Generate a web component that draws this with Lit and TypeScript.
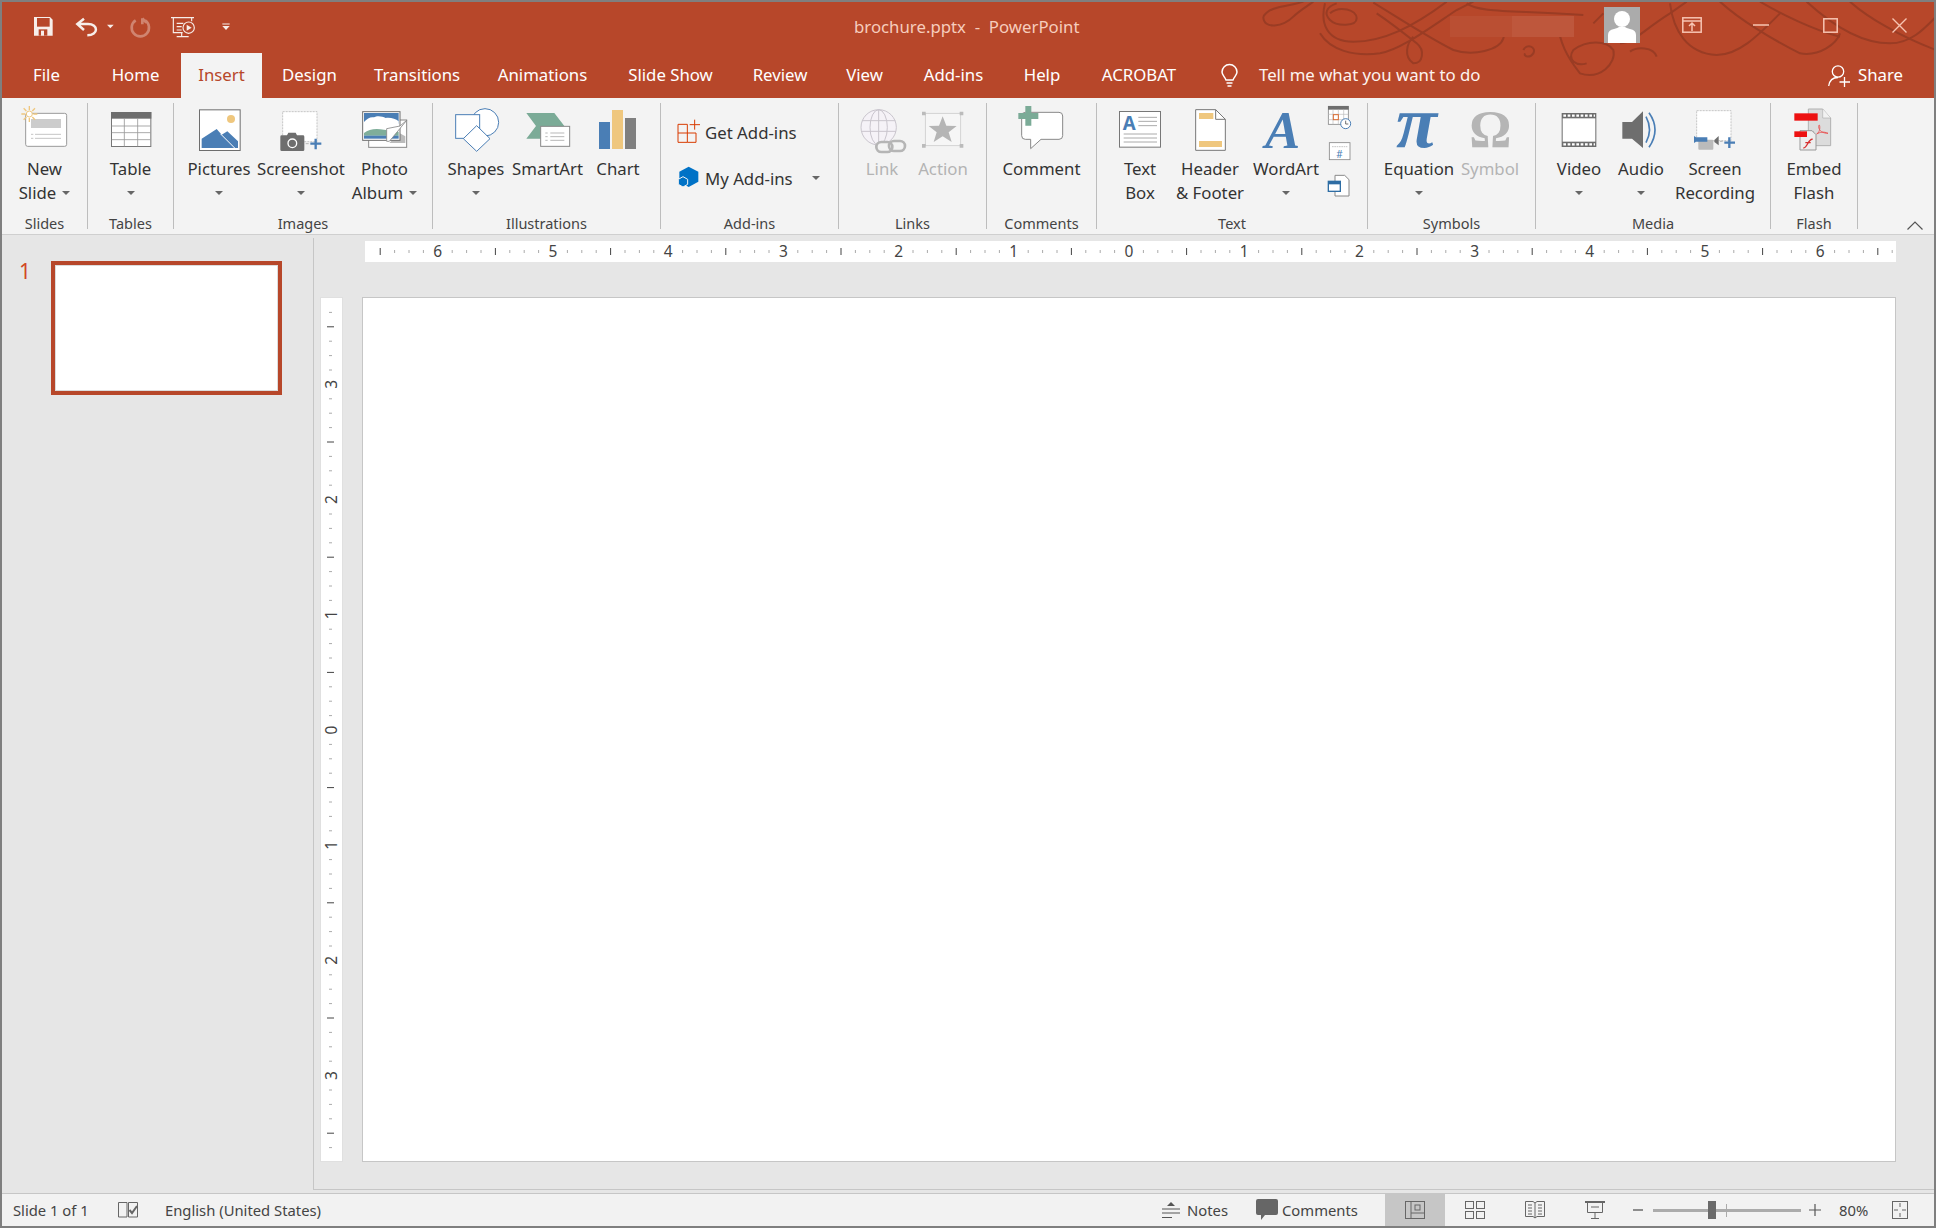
import { LitElement, html, css, svg } from "lit";
import { customElement } from "lit/decorators.js";

const BLUE = "#4A7EB5";
const YEL = "#EFC77E";
const GRN = "#7BAB97";
const DK = "#6e6e6e";

const ico = (vbx: number, c: unknown) =>
  html`<svg class="ico" width="60" height="54" viewBox="${vbx} 15 180 162">${c}</svg>`;
const z = (x: number, y: number, w: number, h: number, c: unknown) =>
  html`<svg class="z" width="${w / 3}" height="${h / 3}" viewBox="${x} ${y} ${w} ${h}">${c}</svg>`;

const I = {
  newSlide: svg`<rect x="77" y="46" width="123" height="99" rx="6" fill="#fff" stroke="#999" stroke-width="3"/>
    <rect x="93" y="63" width="90" height="27" fill="#ccc"/>
    <path d="M105 109H183M105 121H183M93 109h7M93 121h7" stroke="#bbb" stroke-width="2.5"/>
    <circle cx="88" cy="48" r="9" fill="#fff" stroke="${YEL}" stroke-width="3"/>
    <path d="M88 24V36M88 60V72M64 48H76M100 48H112M71 31L79 39M97 57L105 65M71 65L79 57M97 39L105 31" stroke="${YEL}" stroke-width="4"/>`,
  table: svg`<rect x="334.5" y="43.5" width="118" height="102" fill="#fff" stroke="#777" stroke-width="3"/>
    <rect x="333" y="42" width="121" height="20" fill="${DK}"/>
    <path d="M373 62V145M413 62V145M335 84H452M335 104H452M335 125H452" stroke="#999" stroke-width="2.5"/>`,
  pictures: svg`<rect x="598.5" y="35.5" width="122" height="122" fill="#fff" stroke="${DK}" stroke-width="3"/>
    <circle cx="693" cy="63" r="12" fill="${YEL}"/>
    <path d="M605 150V122L650 93L665 110L682 100L714 130V150Z" fill="${BLUE}"/>
    <path d="M662 108L704 150" stroke="#fff" stroke-width="3"/>`,
  screenshot: svg`<rect x="847" y="41" width="103" height="90" fill="#fff" stroke="#bbb" stroke-width="2.5" stroke-dasharray="6 3"/>
    <path d="M840 116q0-4 4-4h16l4-8h22l4 8h18q4 0 4 4v39q0 4-4 4h-64q-4 0-4-4z" fill="${DK}"/>
    <circle cx="876" cy="136" r="13" fill="${DK}" stroke="#fff" stroke-width="4"/>
    <path d="M916 137h9" stroke="#aaa" stroke-width="2.5"/>
    <path d="M930 137H963M946 122V154" stroke="${BLUE}" stroke-width="7"/>`,
  photo: svg`<rect x="1103" y="66" width="114" height="82" fill="#fff" stroke="#888" stroke-width="3"/>
    <path d="M1165 135L1195 105L1213 115V135Z" fill="#bbb"/>
    <rect x="1085" y="41" width="112" height="86" fill="#fff" stroke="${DK}" stroke-width="3"/>
    <rect x="1089" y="45" width="104" height="32" fill="${BLUE}"/>
    <path d="M1089 72c10-12 20-16 30-14 8-6 25-4 35 2 14-2 30 2 39 10v20H1089z" fill="#fff"/>
    <path d="M1089 105c15-12 35-15 60-10 15 3 25 6 44 6v12H1089z" fill="#7FAE9A"/>
    <rect x="1089" y="113" width="104" height="9" fill="${BLUE}"/>
    <path d="M1157 130V92L1197 84L1218 66L1165 130Z" fill="#fff" stroke="#888" stroke-width="2.5"/>`,
  shapes: svg`<circle cx="165" cy="73" r="41" fill="#fff" stroke="${BLUE}" stroke-width="3"/>
    <rect x="77" y="50" width="72" height="71" fill="#fff" stroke="${BLUE}" stroke-width="3"/>
    <path d="M140 83L180 122L140 160L100 122Z" fill="#fff" stroke="${BLUE}" stroke-width="3"/>`,
  smart: svg`<path d="M288 45H372L402 84L372 122H288L317 84Z" fill="${GRN}"/>
    <rect x="331" y="85" width="87" height="60" fill="#fff" stroke="#888" stroke-width="3"/>
    <path d="M360 105H402M360 116H402M360 127H402M345 105h7M345 116h7M345 127h7" stroke="#aaa" stroke-width="2.5"/>`,
  chart: svg`<rect x="507" y="72" width="33" height="81" fill="${BLUE}"/>
    <rect x="546" y="36" width="33" height="117" fill="${YEL}"/>
    <rect x="585" y="60" width="33" height="93" fill="#7f7f7f"/>`,
  link: svg`<circle cx="1345" cy="88" r="53" fill="#F5F2F7" stroke="#c9c5cd" stroke-width="3"/>
    <ellipse cx="1345" cy="88" rx="26" ry="53" fill="none" stroke="#c9c5cd" stroke-width="3"/>
    <path d="M1295 68H1395M1293 100H1397M1345 35V141" stroke="#c9c5cd" stroke-width="3"/>
    <rect x="1338" y="132" width="48" height="30" rx="15" fill="#F3F3F3" stroke="#b5b5b5" stroke-width="8"/>
    <rect x="1376" y="129" width="48" height="30" rx="15" fill="none" stroke="#b5b5b5" stroke-width="8"/>`,
  action: svg`<rect x="-74" y="46" width="106" height="97" fill="#f6f6f6" stroke="#ccc" stroke-width="2.5"/>
    <path d="M-84 41h11v11h-11zM29 41h11v11h-11zM-84 138h11v11h-11zM29 138h11v11h-11z" fill="#bbb"/>
    <path d="M-22 55L-11 83L20 84L-4 103L5 132L-22 115L-49 132L-40 103L-64 84L-33 83Z" fill="#b5b5b5"/>`,
  comment: svg`<path d="M225 43H326a11 11 0 0 1 11 11V113a11 11 0 0 1-11 11H272L241 152V124H225a11 11 0 0 1-11-11V54a11 11 0 0 1 11-11Z" fill="#fff" stroke="#888" stroke-width="3"/>
    <path d="M234 24V83M204 54H264" stroke="${GRN}" stroke-width="18"/>`,
  textbox: svg`<rect x="508.5" y="40.5" width="123" height="107" fill="#fff" stroke="#777" stroke-width="3"/>
    <text x="518" y="96" font-size="56" font-weight="700" font-family="Noto Sans, sans-serif" fill="${BLUE}">A</text>
    <path d="M565 58H621M565 70H621M565 83H621M521 108H621M521 120H621M521 132H621" stroke="#aaa" stroke-width="3"/>`,
  header: svg`<path d="M737 35H797L826 64V157H737Z" fill="#fff" stroke="#777" stroke-width="3"/>
    <path d="M797 35V64H826" fill="none" stroke="#777" stroke-width="3"/>
    <rect x="747" y="45" width="43" height="18" fill="${YEL}"/>
    <rect x="747" y="129" width="69" height="18" fill="${YEL}"/>`,
  wordart: svg`<text x="945" y="150" font-size="158" font-weight="700" font-style="italic" font-family="Liberation Serif, serif" fill="${BLUE}">A</text>`,
  pi: svg`<text x="1338" y="146" font-size="225" font-weight="700" font-style="italic" font-family="Liberation Serif, serif" fill="${BLUE}">π</text>`,
  omega: svg`<text x="58" y="147" font-size="158" font-weight="700" font-family="Liberation Serif, serif" fill="#b5b5b5">Ω</text>`,
  video: svg`<rect x="335.5" y="46.5" width="101" height="99" fill="#fff" stroke="${DK}" stroke-width="3"/>
    <rect x="335" y="46" width="102" height="15" fill="${DK}"/>
    <rect x="335" y="131" width="102" height="15" fill="${DK}"/>
    <path d="M339 53H434M339 139H434" stroke="#fff" stroke-width="7" stroke-dasharray="8 5"/>`,
  audio: svg`<path d="M516 72H545L578 40V150L545 122H516Z" fill="${DK}"/>
    <path d="M587 56Q608 95 587 134M596 44Q632 95 596 148" fill="none" stroke="${BLUE}" stroke-width="5"/>`,
  screenrec: svg`<rect x="740" y="38" width="103" height="90" fill="#fff" stroke="#bbb" stroke-width="2.5" stroke-dasharray="6 3"/>
    <rect x="745" y="125" width="45" height="30" rx="3" fill="#bbb"/>
    <path d="M732 114L738 118H772V131H738L732 135Z" fill="${BLUE}"/>
    <path d="M793 126L806 114V142L793 132Z" fill="${DK}"/>
    <path d="M810 130h8" stroke="#aaa" stroke-width="2.5"/>
    <path d="M823 134H855M838 118V150" stroke="${BLUE}" stroke-width="7"/>`,
  flash: svg`<path d="M1075 33H1118L1142 60V143H1090V100H1075Z" fill="#dcdcdc" stroke="#b0b0b0" stroke-width="3"/>
    <path d="M1118 33V60H1142" fill="#f2f2f2" stroke="#b0b0b0" stroke-width="2"/>
    <rect x="1033" y="46" width="70" height="22" fill="#ED1111"/>
    <path d="M1100 108C1115 100 1108 70 1106 85C1106 100 1120 106 1134 106C1122 100 1110 102 1100 108Z" fill="none" stroke="#E84B4B" stroke-width="2.5"/>
    <path d="M1050 98H1086L1098 110V156H1050Z" fill="#eee" stroke="#999" stroke-width="3"/>
    <rect x="1033" y="100" width="38" height="17" fill="#ED1111"/>
    <path d="M1060 150C1072 150 1076 120 1088 124M1066 134H1082" fill="none" stroke="#D63030" stroke-width="4"/>`,
  getAdd: svg`<path d="M746 76H774V130H746ZM746 102H800V130H774" fill="none" stroke="#D83B01" stroke-width="3"/>
    <path d="M796 62V92M781 77H812" stroke="#D83B01" stroke-width="3"/>`,
  myAdd: svg`<path d="M778 207L807 222V252L778 268L750 252V222Z" fill="#0072C6"/>
    <path d="M761 237L775 245V260L761 268L747 260V245Z" fill="#0072C6" stroke="#F3F3F3" stroke-width="3"/>`,
  date: svg`<rect x="1136" y="26" width="60" height="54" fill="#fff" stroke="#888" stroke-width="2.5"/>
    <rect x="1135" y="25" width="62" height="11" fill="${DK}"/>
    <path d="M1150 36V80M1166 36V80M1182 36V80M1136 50H1196M1136 66H1196" stroke="#bbb" stroke-width="2"/>
    <rect x="1151" y="51" width="15" height="15" fill="#fff" stroke="#D8692F" stroke-width="3"/>
    <circle cx="1188" cy="78" r="15" fill="#fff" stroke="${BLUE}" stroke-width="3"/>
    <path d="M1188 69V79H1196" fill="none" stroke="#555" stroke-width="2.5"/>`,
  num: svg`<rect x="1139" y="136" width="62" height="51" fill="#fff" stroke="#888" stroke-width="2.5"/>
    <path d="M1147 148H1193" stroke="#aaa" stroke-width="2" stroke-dasharray="5 2"/>
    <text x="1160" y="181" font-size="30" font-family="Noto Sans, sans-serif" fill="${BLUE}">#</text>`,
  obj: svg`<path d="M1156 233H1185L1198 246V295H1156Z" fill="#fff" stroke="#888" stroke-width="3"/>
    <rect x="1136" y="251" width="36" height="30" fill="#fff" stroke="#2E6DA4" stroke-width="4"/>
    <rect x="1136" y="251" width="36" height="9" fill="#2E6DA4"/>`,
};

type Btn = { w: number; l: string[]; i: unknown; caret?: "in" | "below"; off?: boolean };
type Group = { name: string; w: number; pl: number; items?: Btn[]; kind?: string };

const G: Group[] = [
  { name: "Slides", w: 86, pl: 0, items: [{ w: 85, l: ["New", "Slide"], i: ico(45, I.newSlide), caret: "in" }] },
  { name: "Tables", w: 86, pl: 0, items: [{ w: 85, l: ["Table"], i: ico(303, I.table), caret: "below" }] },
  { name: "Images", w: 259, pl: 8, items: [
    { w: 74, l: ["Pictures"], i: ico(567, I.pictures), caret: "below" },
    { w: 90, l: ["Screenshot"], i: ico(812, I.screenshot), caret: "below" },
    { w: 77, l: ["Photo", "Album"], i: ico(1062, I.photo), caret: "in" },
  ] },
  { name: "Illustrations", w: 228, pl: 8, items: [
    { w: 70, l: ["Shapes"], i: ico(48, I.shapes), caret: "below" },
    { w: 73, l: ["SmartArt"], i: ico(263, I.smart) },
    { w: 68, l: ["Chart"], i: ico(474, I.chart) },
  ] },
  { name: "Add-ins", w: 178, pl: 15, kind: "addins" },
  { name: "Links", w: 148, pl: 8, items: [
    { w: 70, l: ["Link"], i: ico(1265, I.link), off: true },
    { w: 52, l: ["Action"], i: ico(-111, I.action), off: true },
  ] },
  { name: "Comments", w: 110, pl: 0, items: [{ w: 109, l: ["Comment"], i: ico(185, I.comment) }] },
  { name: "Text", w: 271, pl: 8, kind: "text", items: [
    { w: 70, l: ["Text", "Box"], i: ico(480, I.textbox) },
    { w: 70, l: ["Header", "& Footer"], i: ico(690, I.header) },
    { w: 82, l: ["WordArt"], i: ico(918, I.wordart), caret: "below" },
  ] },
  { name: "Symbols", w: 168, pl: 8, items: [
    { w: 86, l: ["Equation"], i: ico(1317, I.pi), caret: "below" },
    { w: 56, l: ["Symbol"], i: ico(30, I.omega), off: true },
  ] },
  { name: "Media", w: 235, pl: 8, items: [
    { w: 70, l: ["Video"], i: ico(296, I.video), caret: "below" },
    { w: 54, l: ["Audio"], i: ico(482, I.audio), caret: "below" },
    { w: 94, l: ["Screen", "Recording"], i: ico(705, I.screenrec) },
  ] },
  { name: "Flash", w: 87, pl: 0, items: [{ w: 86, l: ["Embed", "Flash"], i: ico(1002, I.flash) }] },
];

const TABS: [string, number][] = [
  ["File", 87], ["Home", 91], ["Insert", 81], ["Design", 95], ["Transitions", 120], ["Animations", 131],
  ["Slide Show", 125], ["Review", 94], ["View", 75], ["Add-ins", 103], ["Help", 74], ["ACROBAT", 120],
];

const hTicks = () => {
  const W = 1531, o = 764, s = 115.2 / 8, out: unknown[] = [];
  for (let i = -53; i <= 53; i++) {
    const x = o + i * s;
    if (x < 2 || x > W - 2) continue;
    if (i % 8 === 0) out.push(svg`<text class="rn" x="${x}" y="16" text-anchor="middle">${Math.abs(i / 8)}</text>`);
    else if (i % 4 === 0) out.push(svg`<path d="M${x} 7V14" stroke="#444"/>`);
    else out.push(svg`<path d="M${x} 9V12" stroke="#aaa"/>`);
  }
  return out;
};
const vTicks = () => {
  const H = 863, o = 432, s = 115.2 / 8, out: unknown[] = [];
  for (let i = -29; i <= 29; i++) {
    const y = o + i * s;
    if (y < 4 || y > H - 4) continue;
    if (i % 8 === 0) out.push(svg`<text class="rn" transform="translate(16 ${y}) rotate(-90)" text-anchor="middle">${Math.abs(i / 8)}</text>`);
    else if (i % 4 === 0) out.push(svg`<path d="M6 ${y}H13" stroke="#444"/>`);
    else out.push(svg`<path d="M8 ${y}H11" stroke="#aaa"/>`);
  }
  return out;
};

@customElement("app-root")
export class AppRoot extends LitElement {
  static styles = css`
    :host { display: block; width: 1936px; height: 1228px; font-family: "Noto Sans", sans-serif; color: #333; overflow: hidden; }
    * { box-sizing: border-box; }
    svg { display: block; flex: none; overflow: visible; }
    .win { width: 1936px; height: 1228px; border: 2px solid #7f7f7f; display: flex; flex-direction: column; background: #e6e6e6; }
    .head { position: relative; background: #B7472A; height: 96px; flex: none; color: #fff; overflow: hidden; }
    .swirl { position: absolute; left: 1238px; top: 0; }
    .trow { position: relative; display: flex; align-items: center; height: 49px; margin-bottom: 2px; }
    .qat { flex: 0 0 852px; display: flex; align-items: center; padding-left: 32px; }
    .title { font-size: 16.8px; color: #F6CDBD; white-space: pre; }
    .right { margin-left: auto; display: flex; align-items: center; padding-right: 27px; }
    .blur { width: 62px; height: 21px; background: #BA4F33; }
    .blur.b { background: #BE573C; margin-right: 30px; }
    .avatar { width: 36px; height: 36px; background: #ABABAB; margin-right: 42px; margin-bottom: 3px; }
    .wcb { margin-bottom: 3px; }
    .tabs { position: relative; display: flex; align-items: stretch; height: 45px; padding-left: 1px; font-size: 16.8px; }
    .tab { display: flex; align-items: center; justify-content: center; white-space: nowrap; padding-bottom: 2px; }
    .tab.on { background: #F3F3F3; color: #B7472A; }
    .tell { margin-left: 22px; display: flex; align-items: center; gap: 21px; color: #fdf3ef; white-space: nowrap; }
    .tell span, .share span { margin-top: -2px; }
    .share { margin-left: auto; display: flex; align-items: center; gap: 7px; padding-right: 31px; }
    .ribbon { position: relative; flex: none; height: 137px; background: #F3F3F3; border-bottom: 1px solid #cfcfcf; padding-top: 5px; display: flex; font-size: 16.8px; }
    .grp { display: flex; flex-direction: column; height: 126px; border-right: 1px solid #bdbdbd; flex: none; }
    .btns { flex: 1; display: flex; min-height: 0; }
    .gl { height: 18px; line-height: 18px; margin-bottom: -3px; text-align: center; font-size: 14.5px; color: #444; white-space: nowrap; }
    .btn { display: flex; flex-direction: column; align-items: center; flex: none; }
    .btn .ln { height: 24px; line-height: 24px; white-space: nowrap; display: flex; align-items: center; gap: 6px; }
    .off { color: #b3b3b3; }
    .car { width: 0; height: 0; border: 4px solid transparent; border-top: 4px solid #666; border-bottom: 0; flex: none; }
    .below { height: 24px; display: flex; align-items: center; }
    .addins { display: flex; flex-direction: column; gap: 20px; padding-top: 16px; }
    .arow { display: flex; align-items: center; gap: 3px; height: 26px; white-space: nowrap; }
    .arow .car { margin-left: 16px; }
    .smalls { display: flex; flex-direction: column; gap: 8px; padding-top: 2px; }
    .collapse { position: absolute; right: 11px; bottom: 4px; }
    .main { flex: 1; display: flex; min-height: 0; }
    .side { flex: 0 0 312px; margin: 3px 0; border-right: 1px solid #c6c6c6; padding: 23px 0 0 17px; display: flex; gap: 23px; align-items: flex-start; }
    .num { color: #D24726; font-size: 21px; line-height: 20px; width: 9px; }
    .thumb { width: 231px; height: 134px; border: 4px solid #B7472A; background: #fff; box-shadow: inset 0 0 0 1px #dcdcdc; }
    .edit { flex: 1; display: flex; flex-direction: column; min-width: 0; margin-bottom: 3px; border-bottom: 1px solid #c6c6c6; padding: 6px 0 0 7px; }
    .grid { display: grid; grid-template-columns: 21px 1534px; column-gap: 20px; grid-template-rows: 21px 865px; row-gap: 35px; }
    .hr { grid-column: 1 / 3; margin-left: 44px; width: 1531px; height: 21px; background: #fff; }
    .vr { width: 21px; height: 863px; margin-top: 1px; background: #fff; outline: 1px solid #e0e0e0; }
    .slide { background: #fff; border: 1px solid #c6c6c6; }
    .rn { font: 15.5px "Noto Sans", sans-serif; fill: #444; }
    .status { flex: none; height: 33px; background: #F2F2F2; border-top: 1px solid #c6c6c6; display: flex; align-items: center; font-size: 14.8px; color: #444; white-space: nowrap; }
    .s1 { width: 105px; margin-left: 11px; }
    .s2 { margin-left: 27px; }
    .sr { margin-left: auto; display: flex; align-items: center; height: 100%; }
    .vbtn { width: 60px; height: 100%; display: flex; align-items: center; justify-content: center; }
    .vbtn.on { background: #C6C6C6; }
    .slider { position: relative; width: 148px; height: 3px; background: #ABABAB; margin-left: 10px; }
    .thumbz { position: absolute; left: 55px; top: -8px; width: 8px; height: 18px; background: #6a6a6a; }
    .tickz { position: absolute; left: 73px; top: -5px; width: 1px; height: 13px; background: #aaa; }
  `;

  private btn(b: Btn) {
    return html`<div class="btn ${b.off ? "off" : ""}" style="width:${b.w}px">
      ${b.i}
      ${b.l.map((t, n) => html`<div class="ln">${t}${b.caret === "in" && n === b.l.length - 1 ? html`<span class="car"></span>` : ""}</div>`)}
      ${b.caret === "below" ? html`<div class="below"><span class="car"></span></div>` : ""}
    </div>`;
  }

  private group(g: Group) {
    let body: unknown;
    if (g.kind === "addins") {
      body = html`<div class="addins">
        <div class="arow">${z(740, 60, 78, 78, I.getAdd)}<span>Get Add-ins</span></div>
        <div class="arow">${z(740, 202, 78, 78, I.myAdd)}<span>My Add-ins</span><span class="car"></span></div>
      </div>`;
    } else {
      body = html`${g.items!.map((b) => this.btn(b))}
        ${g.kind === "text" ? html`<div class="smalls">${z(1132, 22, 78, 78, I.date)}${z(1132, 125, 78, 78, I.num)}${z(1132, 226, 78, 78, I.obj)}</div>` : ""}`;
    }
    return html`<div class="grp" style="width:${g.w}px">
      <div class="btns" style="padding-left:${g.pl}px">${body}</div>
      <div class="gl">${g.name}</div>
    </div>`;
  }

  render() {
    const L = "#F7C4B2";
    return html`<div class="win">
      <div class="head">
        <svg class="swirl" width="696" height="96" viewBox="0 6 2088 288" fill="none" stroke="#9A3C24" stroke-width="6">
          <path d="M70 50C90 15 150 20 190 5M70 50C70 90 130 80 160 50C180 30 200 20 220 5"/>
          <path d="M255 10C240 70 260 125 340 125C430 125 520 80 620 5"/>
          <path d="M270 40C300 15 350 30 350 55C350 80 290 80 270 60C250 40 260 20 290 10"/>
          <path d="M400 8C470 50 560 110 640 150C700 170 780 150 790 115C800 90 760 90 750 105"/>
          <path d="M520 110C500 130 490 170 520 190C550 190 555 150 530 130C480 90 440 60 410 40"/>
          <path d="M240 100C270 150 340 170 420 160C480 150 560 90 650 30L700 5"/>
          <path d="M680 10C720 40 830 30 1030 45"/>
          <path d="M950 60C960 130 980 170 1020 220C1080 240 1130 190 1120 150C1100 120 1040 120 1000 150C980 180 1010 200 1040 190"/>
          <path d="M850 150C860 130 890 140 880 160C870 175 850 170 855 160"/>
          <path d="M1060 70L1090 40M1140 130C1180 130 1210 90 1290 40L1340 5"/>
          <path d="M1250 170C1240 140 1190 140 1170 155"/>
          <path d="M1290 10C1300 90 1340 160 1430 165C1500 165 1560 100 1620 40"/>
          <path d="M1440 5C1500 60 1600 120 1680 160C1740 170 1790 130 1800 100"/>
          <path d="M1560 5C1620 40 1720 90 1800 110"/>
          <path d="M1700 5C1760 60 1850 130 1950 130C2010 130 2050 90 2088 50"/>
          <path d="M1830 5C1880 50 1980 110 2088 150"/>
        </svg>
        <div class="trow">
          <div class="qat">
            ${z(102, 51, 57, 57, svg`<path d="M102 51H150L158 59V107H102Z" fill="#F7EEEA"/><rect x="111" y="54" width="38" height="26" fill="#B7472A"/><rect x="116" y="88" width="26" height="19" fill="#B7472A"/><rect x="123" y="92" width="9" height="15" fill="#F7EEEA"/>`)}
            <span style="width:23px"></span>
            ${z(228, 52, 66, 60, svg`<path d="M252 57L232 73L252 91M234 73H264C296 73 296 107 262 107" fill="none" stroke="#F7EEEA" stroke-width="7.5"/>`)}
            <span style="width:9px"></span>
            ${z(322, 70, 21, 21, svg`<path d="M322 75H342L332 86Z" fill="#F7EEEA"/>`)}
            <span style="width:15px"></span>
            ${z(388, 50, 66, 60, svg`<path d="M408 60A26 26 0 1 0 436 60M428 54L440 67M428 54V72" fill="none" stroke="#D08470" stroke-width="8"/>`)}
            <span style="width:19px"></span>
            ${z(510, 48, 78, 66, svg`<path d="M513 53H582M520 55V98H548M575 55V64M530 110H566M545 100V110M530 70H550M530 80H545M530 90H545" fill="none" stroke="#F7EEEA" stroke-width="3.5"/><circle cx="566" cy="83" r="17" fill="#B7472A" stroke="#F7EEEA" stroke-width="3.5"/><path d="M560 74L575 83L560 92Z" fill="#F7EEEA"/>`)}
            <span style="width:26px"></span>
            ${z(668, 72, 24, 24, svg`<path d="M669 75H691" stroke="#F7EEEA" stroke-width="3"/><path d="M669 81H691L680 93Z" fill="#F7EEEA"/>`)}
          </div>
          <div class="title">brochure.pptx  -  PowerPoint</div>
          <div class="right">
            <div class="blur"></div><div class="blur b"></div>
            <div class="avatar"><svg width="36" height="36" viewBox="0 0 36 36"><circle cx="18" cy="12" r="8" fill="#fff"/><path d="M4 36V28q0-5 6-6 4-1 5-2h6q1 1 5 2 6 1 6 6v8Z" fill="#fff"/></svg></div>
            <svg class="wcb" width="20" height="16" viewBox="0 0 20 16" fill="none" stroke="${L}" stroke-width="1.5" style="margin-right:51px"><rect x=".8" y=".8" width="18.4" height="14.4"/><path d="M1 4H19M10 14V7M7 9l3-3 3 3"/></svg>
            <svg class="wcb" width="16" height="2" viewBox="0 0 16 2" style="margin-right:54px"><path d="M0 1H16" stroke="${L}" stroke-width="1.5"/></svg>
            <svg class="wcb" width="15" height="15" viewBox="0 0 15 15" style="margin-right:54px"><rect x=".8" y=".8" width="13.4" height="13.4" fill="none" stroke="${L}" stroke-width="1.5"/></svg>
            <svg class="wcb" width="15" height="15" viewBox="0 0 15 15"><path d="M.5 .5L14.5 14.5M14.5 .5L.5 14.5" stroke="${L}" stroke-width="1.4"/></svg>
          </div>
        </div>
        <div class="tabs">
          ${TABS.map(([t, w]) => html`<div class="tab ${t === "Insert" ? "on" : ""}" style="width:${w}px">${t}</div>`)}
          <div class="tell">
            <svg width="17" height="24" viewBox="0 0 17 24" fill="none" stroke="#fff" stroke-width="1.5"><path d="M5 16C4 13 1 11 1 8A7.5 7.5 0 0 1 16 8C16 11 13 13 12 16Z"/><path d="M5.5 19H11.5M6.5 22H10.5"/></svg>
            <span>Tell me what you want to do</span>
          </div>
          <div class="share">
            <svg width="23" height="22" viewBox="0 0 23 22" fill="none" stroke="#fff" stroke-width="1.3"><circle cx="10" cy="6.5" r="5.7"/><path d="M.7 21C1.5 15 5 12.5 10 12.5M16.5 12V22M11.5 17H22"/></svg>
            <span>Share</span>
          </div>
        </div>
      </div>
      <div class="ribbon">
        ${G.map((g) => this.group(g))}
        <svg class="collapse" width="16" height="9" viewBox="0 0 16 9"><path d="M.5 8.5L8 1L15.5 8.5" fill="none" stroke="#555" stroke-width="1.2"/></svg>
      </div>
      <div class="main">
        <div class="side">
          <div class="num">1</div>
          <div class="thumb"></div>
        </div>
        <div class="edit">
          <div class="grid">
            <div class="hr"><svg width="1531" height="21">${hTicks()}</svg></div>
            <div class="vr"><svg width="21" height="863">${vTicks()}</svg></div>
            <div class="slide"></div>
          </div>
        </div>
      </div>
      <div class="status">
        <span class="s1">Slide 1 of 1</span>
        <svg width="20" height="18" viewBox="0 0 20 18" fill="none" stroke="#666"><path d="M.5 1.5H9V16H.5ZM10.5 16H19.5V1.5H10.5V16"/><path d="M11.5 9L14 12L19 5" stroke-width="2"/></svg>
        <span class="s2">English (United States)</span>
        <div class="sr">
          <svg width="18" height="18" viewBox="0 0 18 18" style="margin-right:7px"><path d="M5 5L9 1L13 5Z" fill="#555"/><path d="M0 8H18M0 12H18M0 16.5H10" stroke="#555"/></svg>
          <span style="width:69px">Notes</span>
          <svg width="22" height="22" viewBox="0 0 22 22" style="margin-right:4px"><path d="M2 0H20Q22 0 22 2V14Q22 16 20 16H9L5 21V16H2Q0 16 0 14V2Q0 0 2 0Z" fill="#666"/></svg>
          <span style="width:103px">Comments</span>
          <div class="vbtn on"><svg width="20" height="18" viewBox="0 0 20 18" fill="none" stroke="#666"><rect x=".5" y=".5" width="19" height="17"/><path d="M6 .5V17.5M6 12H19.5"/><rect x="10" y="4" width="5" height="5"/></svg></div>
          <div class="vbtn"><svg width="20" height="18" viewBox="0 0 20 18" fill="none" stroke="#666"><rect x=".5" y=".5" width="8" height="7"/><rect x="11.5" y=".5" width="8" height="7"/><rect x=".5" y="10.5" width="8" height="7"/><rect x="11.5" y="10.5" width="8" height="7"/></svg></div>
          <div class="vbtn"><svg width="20" height="18" viewBox="0 0 20 18" fill="none" stroke="#666"><path d="M.5 .5H8L10 2L12 .5H19.5V15.5H12L10 17L8 15.5H.5ZM10 2V17M3 4H7M3 7H7M3 10H7M3 13H7M13 4H17M13 7H17M13 10H17M13 13H17"/></svg></div>
          <div class="vbtn"><svg width="20" height="18" viewBox="0 0 20 18" fill="none" stroke="#666"><path d="M0 1H20" stroke-width="2"/><path d="M2.5 2V11.5H17.5V2M10 11.5V17M6 17.5H14M6 6H14"/></svg></div>
          <svg width="10" height="2" viewBox="0 0 10 2" style="margin-left:8px"><path d="M0 1H10" stroke="#555" stroke-width="1.3"/></svg>
          <div class="slider"><div class="tickz"></div><div class="thumbz"></div></div>
          <svg width="12" height="12" viewBox="0 0 12 12" style="margin-left:8px"><path d="M0 6H12M6 0V12" stroke="#555" stroke-width="1.2"/></svg>
          <span style="width:40px;margin-left:18px">80%</span>
          <svg width="16" height="18" viewBox="0 0 16 18" fill="none" stroke="#666" style="margin:0 26px 0 13px"><rect x=".5" y=".5" width="15" height="17"/><path d="M8 2V6M8 12V16M2 9H6M10 9H14"/></svg>
        </div>
      </div>
    </div>`;
  }
}
